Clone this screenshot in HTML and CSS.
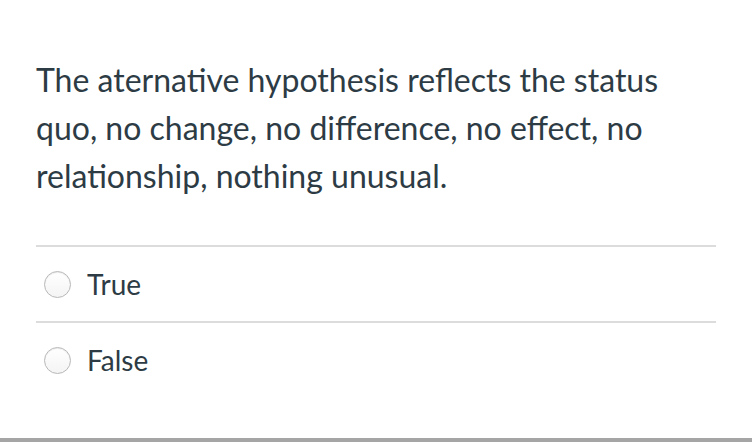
FILE: index.html
```html
<!DOCTYPE html>
<html>
<head>
<meta charset="utf-8">
<link rel="stylesheet" href="styles.css">
</head>
<body>
<div class="page">
  <div class="question">
    <p class="text">The aterna&zwnj;tive hypothesis reflects the status quo, no change, no difference, no effect, no rela&zwnj;tionship, nothing unusual.</p>
    <div class="answers">
      <label class="answer"><span class="radio"></span><span class="label">True</span></label>
      <label class="answer"><span class="radio"></span><span class="label">False</span></label>
    </div>
  </div>
</div>
</body>
</html>
```
FILE: styles.css
```css
html, body {
  margin: 0;
  padding: 0;
  background: #fff;
}
.page {
  width: 752px;
  height: 442px;
  box-sizing: border-box;
  border-bottom: 4px solid #a5a5a5;
  font-family: Lato, "Open Sans", sans-serif;
  color: #2d3b45;
}
.question {
  padding: 56px 36px 0 36px;
  width: 680px;
}
.text {
  margin: 0;
  font-size: 32px;
  line-height: 48px;
  padding-bottom: 45px;
  border-bottom: 2px solid #dcdcdc;
}
.answers {
  display: flex;
  flex-direction: column;
}
.answer {
  display: flex;
  align-items: center;
  height: 74px;
  padding-left: 8px;
  gap: 16px;
}
.answer + .answer {
  border-top: 2px solid #dcdcdc;
}
.radio {
  width: 25px;
  height: 25px;
  border-radius: 50%;
  border: 1px solid #b8b8b8;
  background: linear-gradient(#ffffff, #f4f4f4);
  box-shadow: inset 0 1px 1px rgba(0,0,0,0.08);
}
.label {
  font-size: 28px;
}
```
